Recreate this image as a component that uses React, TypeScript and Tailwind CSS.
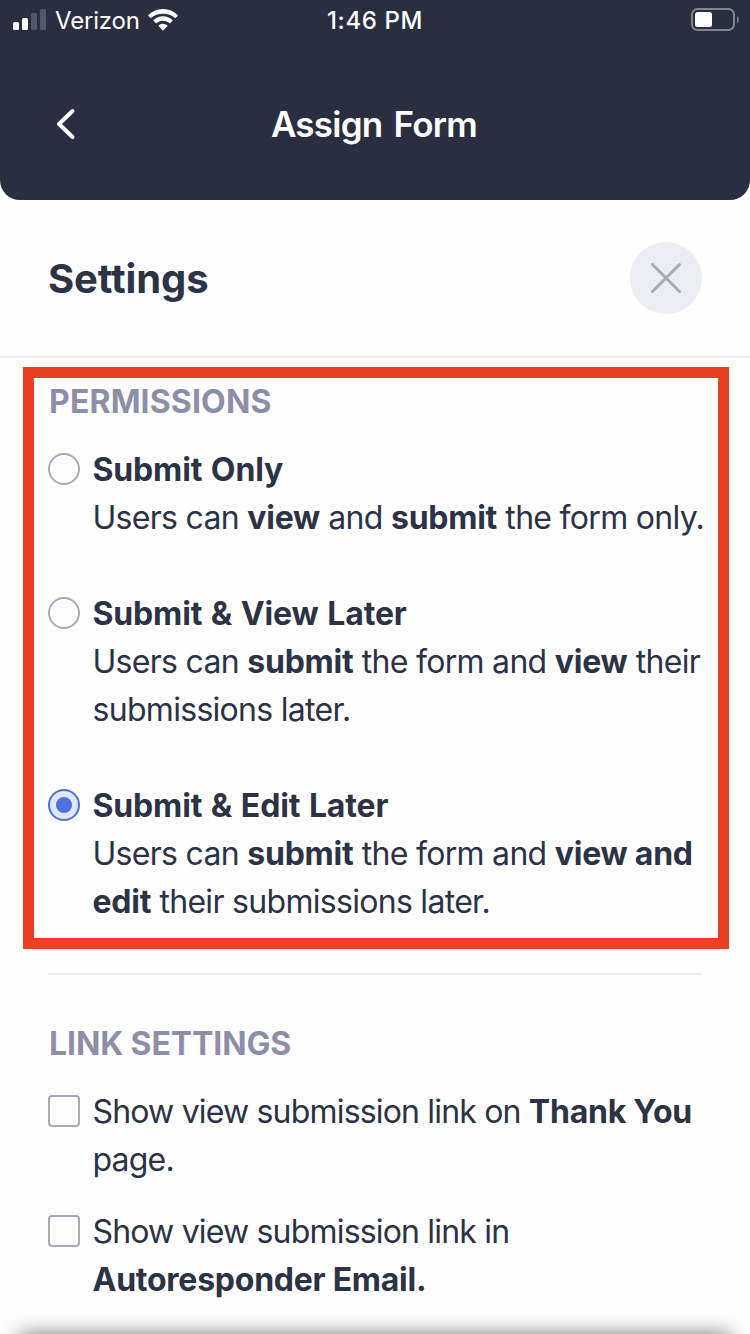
import { useState } from "react";
import type { ReactNode } from "react";

interface OptionProps {
  checked: boolean;
  onSelect: () => void;
  title: string;
  children: ReactNode;
}

function StatusBar() {
  return (
    <div className="grid h-10 grid-cols-3 items-center text-[24px] leading-[39px] text-white">
      <div className="flex items-center pl-[13px]">
        <svg width="33" height="22" viewBox="0 0 33 22" fill="#fff">
          <rect x="0" y="13" width="6" height="8" rx="1.5" />
          <rect x="9" y="9" width="6" height="12" rx="1.5" />
          <rect x="18" y="4" width="6" height="17" rx="1.5" opacity="0.2" />
          <rect x="27" y="0" width="6" height="21" rx="1.5" opacity="0.2" />
        </svg>
        <span className="ml-[9px] w-[84px] pt-px tracking-[-0.2px]">Verizon</span>
        <svg className="ml-[9px]" width="30" height="22" viewBox="0 0 30 22" fill="#fff">
          <path d="M15 0C9.400 0 4.200 2.150 .4 5.900a.7.7 0 0 0 0 1l1.900 1.900a.7.7 0 0 0 1 0A16.700 16.700 0 0 1 15 4.700c4.400 0 8.500 1.300 11.700 4.100a.7.7 0 0 0 1 0l1.900-1.900a.7.7 0 0 0 0-1C25.800 2.150 20.600 0 15 0Z" />
          <path d="M15 7.300c-3.600 0-6.900 1.400-9.400 3.700a.7.7 0 0 0 0 1l2.100 2.100a.7.7 0 0 0 1 0 9.300 9.300 0 0 1 12.600 0 .7.7 0 0 0 1 0l2.100-2.100a.7.7 0 0 0 0-1A13.700 13.700 0 0 0 15 7.300Z" />
          <path d="M15 14.700c-1.600 0-3 .6-4.200 1.600a.7.7 0 0 0 0 1l3.700 4a.7.7 0 0 0 1 0l3.700-4a.7.7 0 0 0 0-1A6.400 6.400 0 0 0 15 14.700Z" />
        </svg>
      </div>
      <span className="pt-px text-center font-medium tracking-[0.6px]">1:46 PM</span>
      <svg className="ml-auto mr-[11px]" width="48" height="24" viewBox="0 0 48 24" fill="none">
        <rect x="1" y="1" width="42" height="21" rx="5.500" stroke="#82848f" strokeWidth="2" />
        <rect x="4" y="4" width="17" height="15" rx="2.500" fill="#fff" />
        <path d="M46 8c2.300 1.600 2.300 5.800 0 7.400Z" fill="#82848f" />
      </svg>
    </div>
  );
}

function RadioOption({ checked, onSelect, title, children }: OptionProps) {
  return (
    <label className="flex">
      <input type="radio" name="permission" className="sr-only" checked={checked} onChange={onSelect} />
      <span
        className={
          checked
            ? "mt-[7px] flex size-8 shrink-0 items-center justify-center rounded-full border-2 border-[#4c71e0] bg-[#e0e7f9]"
            : "mt-[7px] size-8 shrink-0 rounded-full border-2 border-[#a9abb7]"
        }
      >
        {checked && <span className="size-4 rounded-full bg-[#4c71e0]"></span>}
      </span>
      <span className="ml-[12.5px] block tracking-[-0.7px] whitespace-nowrap">
        <b className="tracking-[-0.15px] [word-spacing:1.2px]">{title}</b>
        <br />
        {children}
      </span>
    </label>
  );
}

function CheckOption({ children }: { children: ReactNode }) {
  return (
    <label className="flex">
      <input type="checkbox" className="sr-only" />
      <span className="mt-[7px] size-8 shrink-0 rounded-[4px] border-2 border-[#a9abb7]"></span>
      <span className="ml-[12.5px] block tracking-[-0.82px] whitespace-nowrap">{children}</span>
    </label>
  );
}

function Strong({ children }: { children: ReactNode }) {
  return <b className="tracking-[-0.25px]">{children}</b>;
}

export default function App() {
  const [permission, setPermission] = useState("edit");

  return (
    <div className="relative h-[1334px] w-[750px] overflow-hidden bg-[#fefefe] font-['Inter',sans-serif] text-[#2c3345]">
      <header className="h-[200px] rounded-b-[20px] bg-[#2a2e41]">
        <StatusBar />
        <div className="grid h-[168px] grid-cols-3 items-center">
          <button className="ml-[56px] w-5">
            <svg width="20" height="32" viewBox="0 0 20 32" fill="none">
              <path d="M16.500 3 3 16l13.500 13" stroke="#fff" strokeWidth="4" strokeLinecap="round" strokeLinejoin="round" />
            </svg>
          </button>
          <h1 className="-ml-[2px] pt-px text-center text-[35px] font-semibold tracking-[-0.75px] whitespace-nowrap text-white [word-spacing:3px]">
            Assign Form
          </h1>
        </div>
      </header>

      <div className="flex h-[158px] items-center justify-between border-b-2 border-[#e9e9f0] px-12">
        <h2 className="pt-[2px] text-[40px] font-bold tracking-[-0.1px]">Settings</h2>
        <button className="flex size-[72px] items-center justify-center rounded-full bg-[#ecedf3]">
          <svg width="32" height="32" viewBox="0 0 32 32" stroke="#a9abb4" strokeWidth="3" strokeLinecap="round">
            <path d="M2.500 2.500l27 27M29.500 2.500l-27 27" />
          </svg>
        </button>
      </div>

      <main className="px-12 text-[32px] leading-[48px]">
        <section className="relative h-[617px] border-b-2 border-[#e9e9f0] pt-5">
          <h3 className="pl-px font-bold tracking-[0.15px] text-[#8d8fa9]">PERMISSIONS</h3>
          <div className="mt-5 flex flex-col gap-12">
            <RadioOption title="Submit Only" checked={permission === "submit"} onSelect={() => setPermission("submit")}>
              Users can <Strong>view</Strong> and <Strong>submit</Strong> the form only.
            </RadioOption>
            <RadioOption title="Submit & View Later" checked={permission === "view"} onSelect={() => setPermission("view")}>
              Users can <Strong>submit</Strong> the form and <Strong>view</Strong> their
              <br />
              submissions later.
            </RadioOption>
            <RadioOption title="Submit & Edit Later" checked={permission === "edit"} onSelect={() => setPermission("edit")}>
              Users can <Strong>submit</Strong> the form and <Strong>view and</Strong>
              <br />
              <Strong>edit</Strong> their submissions later.
            </RadioOption>
          </div>
          {/* Highlight frame over the permissions group */}
          <div className="pointer-events-none absolute top-[9px] -left-[25px] h-[582px] w-[706px] border-[11px] border-[#eb4026]"></div>
        </section>

        <section className="pt-[45px]">
          <h3 className="pl-px font-bold tracking-[-0.1px] text-[#8d8fa9]">LINK SETTINGS</h3>
          <div className="mt-5 flex flex-col gap-6">
            <CheckOption>
              Show view submission link on <Strong>Thank You</Strong>
              <br />
              page.
            </CheckOption>
            <CheckOption>
              Show view submission link in
              <br />
              <Strong>Autoresponder Email.</Strong>
            </CheckOption>
          </div>
        </section>
      </main>

      {/* Shadow of the bottom sheet below the fold */}
      <div className="absolute top-[1336px] right-5 left-5 h-10 shadow-[0_0_22px_0_rgba(0,0,0,0.65)]"></div>
    </div>
  );
}
